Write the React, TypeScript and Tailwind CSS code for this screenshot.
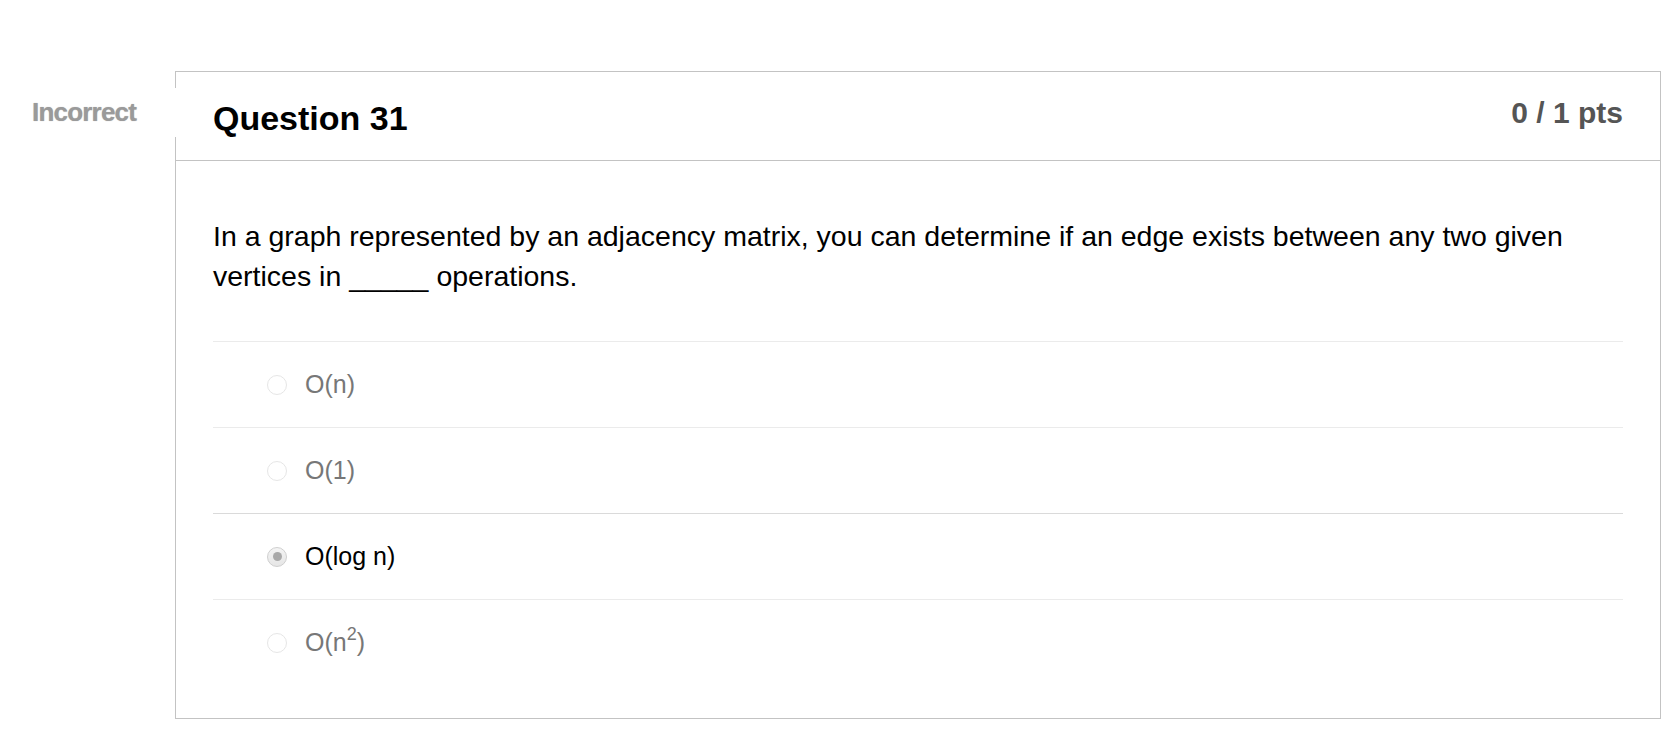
import React from 'react';

type Option = { label: React.ReactNode; selected?: boolean; darkTop?: boolean };

const options: Option[] = [
  { label: 'O(n)' },
  { label: 'O(1)' },
  { label: 'O(log n)', selected: true, darkTop: true },
  { label: <>O(n<sup className="top-[-0.6em] text-[18px]">2</sup>)</> },
];

function Radio({ selected }: { selected?: boolean }) {
  if (selected) {
    return (
      <span className="flex h-[20px] w-[20px] shrink-0 items-center justify-center rounded-full border border-[#cfcfcf] bg-gradient-to-b from-[#f4f4f4] to-[#e6e6e6]">
        <span className="h-[9px] w-[9px] rounded-full bg-[#a9a9a9]" />
      </span>
    );
  }
  return <span className="h-[20px] w-[20px] shrink-0 rounded-full border border-[#e6e6e6] bg-white" />;
}

export default function App() {
  return (
    <div className="min-h-screen bg-white pt-[71px] font-['Liberation_Sans',Arial,sans-serif]">
      <div className="flex">

        {/* Result label */}
        <div className="w-[175px] shrink-0 pl-[32px] pt-[25px]">
          <span className="text-[26px] font-bold leading-[32px] tracking-[-0.8px] text-[#9a9a9a] [text-shadow:0_0_1px_#b5b5b5]">
            Incorrect
          </span>
        </div>

        {/* Question card */}
        <div className="relative w-[1486px] border border-[#c3c3c3]">
          <div className="absolute left-[-1px] top-[16px] h-[49px] w-[2px] bg-white" />

          <div className="flex h-[89px] items-start justify-between border-b border-[#c3c3c3] px-[37px] pt-[21px]">
            <h2 className="mt-[5px] text-[34px] font-bold leading-[40px] text-black">Question 31</h2>
            <span className="text-[30px] font-bold leading-[40px] text-[#555555]">0 / 1 pts</span>
          </div>

          <div className="px-[37px] pb-[33px] pt-[55px]">
            <p className="text-[28.5px] leading-[40px] text-black">
              In a graph represented by an adjacency matrix, you can determine if an edge exists between any two given
              vertices in _____ operations.
            </p>

            <div className="mt-[45px]">
              {options.map((o, i) => (
                <div
                  key={i}
                  className={`flex h-[86px] items-center gap-[18px] border-t pl-[54px] ${o.darkTop ? 'border-[#dadada]' : 'border-[#ebebeb]'}`}
                >
                  <Radio selected={o.selected} />
                  <span className={`text-[25px] ${o.selected ? 'text-black' : 'text-[#777777]'}`}>{o.label}</span>
                </div>
              ))}
            </div>
          </div>
        </div>

      </div>
    </div>
  );
}
